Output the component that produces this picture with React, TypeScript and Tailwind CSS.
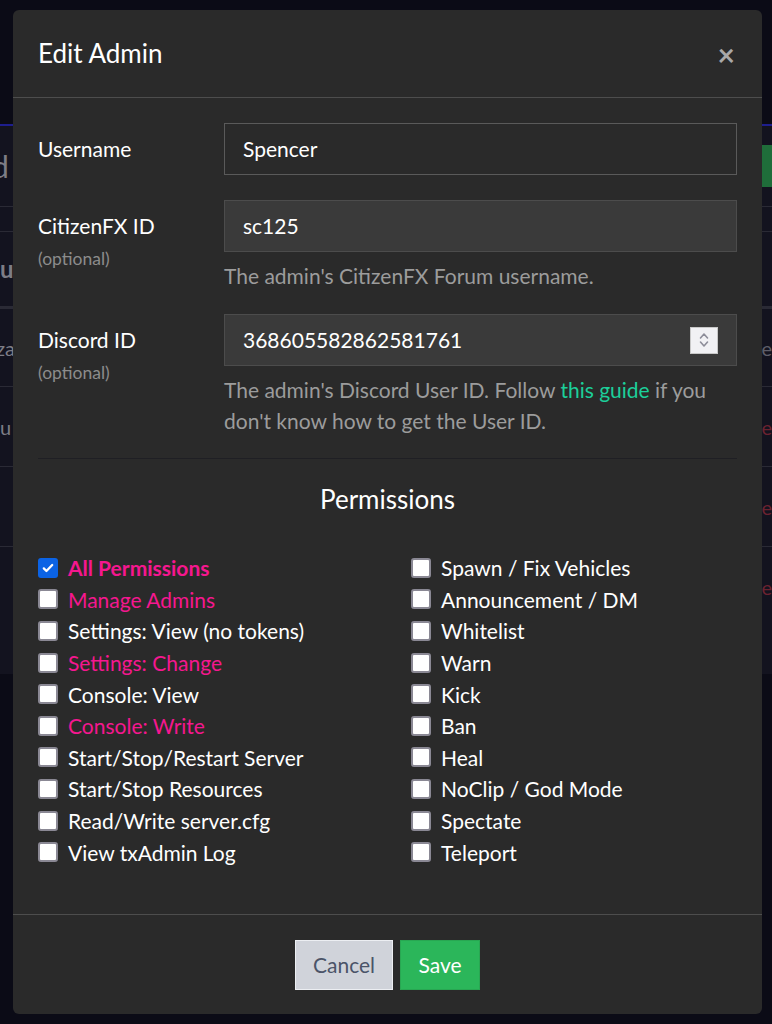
import { useState } from 'react'

type Perm = { label: string; danger?: boolean; bold?: boolean }

const leftPerms: Perm[] = [
  { label: 'All Permissions', danger: true, bold: true },
  { label: 'Manage Admins', danger: true },
  { label: 'Settings: View (no tokens)' },
  { label: 'Settings: Change', danger: true },
  { label: 'Console: View' },
  { label: 'Console: Write', danger: true },
  { label: 'Start/Stop/Restart Server' },
  { label: 'Start/Stop Resources' },
  { label: 'Read/Write server.cfg' },
  { label: 'View txAdmin Log' },
]

const rightPerms: Perm[] = [
  { label: 'Spawn / Fix Vehicles' },
  { label: 'Announcement / DM' },
  { label: 'Whitelist' },
  { label: 'Warn' },
  { label: 'Kick' },
  { label: 'Ban' },
  { label: 'Heal' },
  { label: 'NoClip / God Mode' },
  { label: 'Spectate' },
  { label: 'Teleport' },
]

function Checkbox({ checked }: { checked: boolean }) {
  if (checked) {
    return (
      <span className="flex h-[20px] w-[20px] shrink-0 items-center justify-center rounded-[3px] bg-[#0b63e5]">
        <svg viewBox="0 0 16 16" className="h-[14px] w-[14px]" fill="none" stroke="white" strokeWidth="2.6" strokeLinecap="round" strokeLinejoin="round">
          <path d="M3.2 8.4l3 3 6.6-6.8" />
        </svg>
      </span>
    )
  }
  return <span className="h-[20px] w-[20px] shrink-0 rounded-[3px] border-[2px] border-[#8a8894] bg-white" />
}

function PermRow({ perm, checked }: { perm: Perm; checked: boolean }) {
  return (
    <div className="flex h-[31.6px] items-center gap-[10px]">
      <Checkbox checked={checked} />
      <span className={`text-[21px] leading-none ${perm.danger ? 'text-[#f5178f]' : 'text-white'} ${perm.bold ? 'font-bold' : ''}`}>
        {perm.label}
      </span>
    </div>
  )
}

function BackgroundPage() {
  return (
    <div className="flex h-[1024px] flex-col bg-[#0b0b16]">
      <div className="h-[124px]" />
      <div className="h-[2px] bg-[#1e1e8e]" />
      <div className="flex h-[548px] flex-col bg-[#13131f]">
        <div className="flex h-[80px] items-center justify-between">
          <span className="-ml-[8px] text-[30px] text-[#7d7d86]">d</span>
          <span className="h-[42px] w-[16px] rounded-l-[3px] bg-[#1f6d3a]" />
        </div>
        <div className="h-[25px] border-t border-[#2a2a35]" />
        <div className="flex h-[75px] items-center border-t border-[#2a2a35]">
          <span className="text-[24px] font-bold text-[#7d7d86]">u</span>
        </div>
        <div className="flex h-[80px] items-center justify-between border-t-[3px] border-[#2a2a35]">
          <span className="-ml-[4px] text-[20px] text-[#7d7d86]">za</span>
          <span className="text-[20px] text-[#5e5e68]">ele</span>
        </div>
        <div className="flex h-[80px] items-center justify-between border-t border-[#2a2a35]">
          <span className="text-[20px] text-[#7d7d86]">u</span>
          <span className="text-[20px] text-[#6b2230]">ele</span>
        </div>
        <div className="flex h-[80px] items-center justify-end border-t border-[#2a2a35]">
          <span className="text-[20px] text-[#6b2230]">ele</span>
        </div>
        <div className="flex h-[80px] items-center justify-end border-t border-[#2a2a35]">
          <span className="text-[20px] text-[#6b2230]">ele</span>
        </div>
      </div>
    </div>
  )
}

export default function App() {
  const [all] = useState(true)

  return (
    <div className="relative h-[1024px] w-[772px] overflow-hidden font-['Lato','Liberation_Sans',sans-serif]">
      <BackgroundPage />

      {/* Modal */}
      <div className="absolute left-[13px] top-[10px] flex h-[1004px] w-[749px] flex-col rounded-[6px] bg-[#2a2a2a]">
        <div className="flex h-[88px] items-center justify-between border-b border-[#4d4d4d] px-[25px]">
          <h2 className="text-[26px] font-normal text-white">Edit Admin</h2>
          <span className="mr-[2px] text-[30px] font-bold leading-none text-[#a8a8a8]">×</span>
        </div>

        <div className="flex flex-col px-[25px] pt-[25px]">
          <div className="flex">
            <div className="flex h-[52px] w-[186px] items-center text-[21px] text-white">Username</div>
            <div className="flex h-[52px] flex-1 items-center border border-[#5a5a5a] bg-[#2a2a2a] px-[18px] text-[21px] text-white">Spencer</div>
          </div>

          <div className="mt-[25px] flex">
            <div className="w-[186px]">
              <div className="flex h-[52px] items-center text-[21px] text-white">CitizenFX ID</div>
              <div className="-mt-[6px] text-[17.5px] text-[#8c8c8c]">(optional)</div>
            </div>
            <div className="flex-1">
              <div className="flex h-[52px] items-center border border-[#4c4c4c] bg-[#3a3a3a] px-[18px] text-[21px] text-white">sc125</div>
              <p className="mt-[8px] text-[21px] leading-[31px] text-[#9c9c9c]">The admin's CitizenFX Forum username.</p>
            </div>
          </div>

          <div className="mt-[23px] flex">
            <div className="w-[186px]">
              <div className="flex h-[52px] items-center text-[21px] text-white">Discord ID</div>
              <div className="-mt-[6px] text-[17.5px] text-[#8c8c8c]">(optional)</div>
            </div>
            <div className="flex-1">
              <div className="flex h-[52px] items-center justify-between border border-[#4c4c4c] bg-[#3a3a3a] pl-[18px] pr-[18px] text-[21px] text-white">
                <span>368605582862581761</span>
                <span className="flex h-[27px] w-[28px] flex-col items-center justify-center border border-[#c8c8c8] bg-[#f1f1f4]">
                  <svg viewBox="0 0 12 18" className="h-[20px] w-[12px]" fill="none" stroke="#8d8d99" strokeWidth="1.6" strokeLinecap="round" strokeLinejoin="round">
                    <path d="M2.5 7l3.5-4 3.5 4" />
                    <path d="M2.5 11l3.5 4 3.5-4" />
                  </svg>
                </span>
              </div>
              <p className="mt-[8px] text-[21px] leading-[31px] text-[#9c9c9c]">
                The admin's Discord User ID. Follow <span className="text-[#1ccf9a]">this guide</span> if you don't know how to get the User ID.
              </p>
            </div>
          </div>

          <div className="mt-[22px] border-t border-[#1f1f24]" />

          <h3 className="mt-[21px] text-center text-[26px] font-normal text-white">Permissions</h3>

          <div className="mt-[33px] grid grid-cols-[373px_1fr]">
            <div className="flex flex-col">
              {leftPerms.map((p, i) => (
                <PermRow key={p.label} perm={p} checked={i === 0 && all} />
              ))}
            </div>
            <div className="flex flex-col">
              {rightPerms.map((p) => (
                <PermRow key={p.label} perm={p} checked={false} />
              ))}
            </div>
          </div>
        </div>

        <div className="mt-auto flex h-[100px] items-center justify-center gap-[7px] border-t border-[#4d4d4d]">
          <button className="h-[50px] w-[98px] border border-[#eceef2] bg-[#d0d3da] text-[21px] text-[#4b5468]">Cancel</button>
          <button className="h-[50px] w-[80px] border border-[#28a752] bg-[#2bb65a] text-[21px] text-white">Save</button>
        </div>
      </div>
    </div>
  )
}
